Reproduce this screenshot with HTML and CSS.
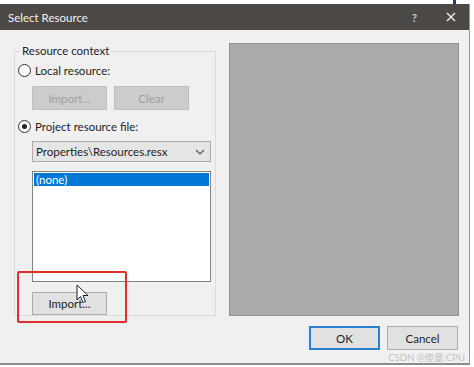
FILE: index.html
```html
<!DOCTYPE html>
<html lang="en">
  <head>
    <meta charset="UTF-8" />
    <meta name="viewport" content="width=device-width, initial-scale=1.0" />
    <title>Select Resource</title>
    <link rel="stylesheet" href="styles.css">
  </head>
  <body>
    <div class="behind-mark"></div>
    <div class="window">
      <div class="titlebar">
        <span class="title">Select Resource</span>
        <span class="help">?</span>
        <svg class="close" width="10" height="10" viewBox="0 0 10 10">
          <path d="M1 1 L9 9 M9 1 L1 9" stroke="#f2f2f2" stroke-width="1.3" />
        </svg>
      </div>
      <div class="content">
        <div class="main">
          <fieldset class="context">
            <legend>Resource context</legend>
            <label class="radio-row">
              <span class="radio"></span>
              Local resource:
            </label>
            <div class="button-row">
              <button class="btn disabled">Import...</button>
              <button class="btn disabled">Clear</button>
            </div>
            <label class="radio-row second">
              <span class="radio checked"></span>
              Project resource file:
            </label>
            <div class="dropdown">
              <span>Properties\Resources.resx</span>
              <svg class="chevron" width="10" height="6" viewBox="0 0 10 6">
                <path d="M1 1 L5 5 L9 1" fill="none" stroke="#555" stroke-width="1.2" />
              </svg>
            </div>
            <div class="listbox">
              <div class="list-item selected">(none)</div>
            </div>
            <button class="btn import">Import...</button>
          </fieldset>
          <div class="preview"></div>
        </div>
        <div class="footer">
          <button class="btn default">OK</button>
          <button class="btn">Cancel</button>
        </div>
      </div>
      <div class="highlight"></div>
      <svg class="cursor" width="14" height="21" viewBox="0 0 14 21">
        <path d="M1 1 L1 16 L4.5 12.5 L7 18.5 L9.5 17.5 L7 11.5 L12 11.5 Z" fill="#fff" stroke="#222" stroke-width="1" stroke-linejoin="round" />
      </svg>
      <span class="watermark">CSDN @傻童:CPU</span>
    </div>
  </body>
</html>
```

FILE: styles.css
```css
body {
  margin: 0;
  background: #fff;
  font-family: "Lato", "Noto Sans CJK SC", sans-serif;
  font-size: 11.5px;
  color: #1e1e1e;
}

.behind-mark {
  position: absolute;
  left: 453px;
  top: 0;
  width: 3px;
  height: 5px;
  background: #2a3a6a;
}

.window {
  position: relative;
  margin-top: 4px;
  width: 469px;
  height: 359px;
  background: #f0f0f0;
  border-right: 1px solid #9a9a9a;
  border-bottom: 2px solid #8c8c8c;
}

.titlebar {
  height: 26px;
  background: #4b4845;
  color: #f2f2f2;
  display: flex;
  align-items: center;
  padding-left: 8px;
}

.title {
  flex: 1;
}

.help {
  color: #c8c8c8;
  font-weight: bold;
  margin-right: 29px;
}

.close {
  margin-right: 13px;
}

.content {
  padding: 13px 10px 0 14px;
}

.main {
  display: flex;
  gap: 13px;
}

.context {
  margin: 0;
  width: 202px;
  height: 273px;
  box-sizing: border-box;
  padding: 3px 4px 0 3px;
  border: 1px solid #dcdcdc;
  display: flex;
  flex-direction: column;
}

.context legend {
  padding: 0 2px;
  margin-left: 2px;
  line-height: 16px;
}

.radio-row {
  display: flex;
  align-items: center;
  gap: 4px;
  height: 16px;
}

.radio-row.second {
  margin-top: 8px;
}

.radio {
  width: 11px;
  height: 11px;
  border: 1px solid #333;
  border-radius: 50%;
  background: #fff;
  position: relative;
}

.radio.checked::after {
  content: "";
  position: absolute;
  left: 3px;
  top: 3px;
  width: 5px;
  height: 5px;
  border-radius: 50%;
  background: #222;
}

.button-row {
  display: flex;
  gap: 7px;
  margin: 8px 0 0 14px;
}

.btn {
  font-family: inherit;
  font-size: 11.5px;
  width: 75px;
  height: 24px;
  padding: 0;
  background: #e1e1e1;
  border: 1px solid #adadad;
  color: #1e1e1e;
}

.btn.disabled {
  background: #cccccc;
  border-color: #bfbfbf;
  color: #a0a0a0;
}

.dropdown {
  margin: 7px 0 0 14px;
  height: 21px;
  box-sizing: border-box;
  border: 1px solid #acacac;
  background: #e5e5e5;
  display: flex;
  align-items: center;
  justify-content: space-between;
  padding: 0 5px 0 3px;
}

.listbox {
  margin: 9px 0 0 14px;
  height: 111px;
  box-sizing: border-box;
  border: 1px solid #828282;
  background: #fff;
  padding: 1px;
}

.list-item {
  height: 13px;
  line-height: 13px;
  padding-left: 2px;
}

.list-item.selected {
  background: #0078d7;
  color: #fff;
}

.btn.import {
  margin: 10px 0 0 14px;
  height: 23px;
}

.preview {
  width: 231px;
  height: 273px;
  box-sizing: border-box;
  background: #aaaaaa;
  border: 1px solid #8f8f8f;
}

.footer {
  display: flex;
  justify-content: flex-end;
  gap: 7px;
  margin-top: 10px;
  padding-right: 1px;
}

.footer .btn {
  width: 71px;
}

.btn.default {
  border: 2px solid #2a7fd0;
}

.highlight {
  position: absolute;
  left: 17px;
  top: 267px;
  width: 106px;
  height: 48px;
  border: 2px solid #e0302e;
  border-radius: 2px;
}

.cursor {
  position: absolute;
  left: 76px;
  top: 280px;
}

.watermark {
  position: absolute;
  right: 4px;
  top: 346px;
  font-size: 9.5px;
  white-space: nowrap;
  color: #c4c4c4;
}
```
